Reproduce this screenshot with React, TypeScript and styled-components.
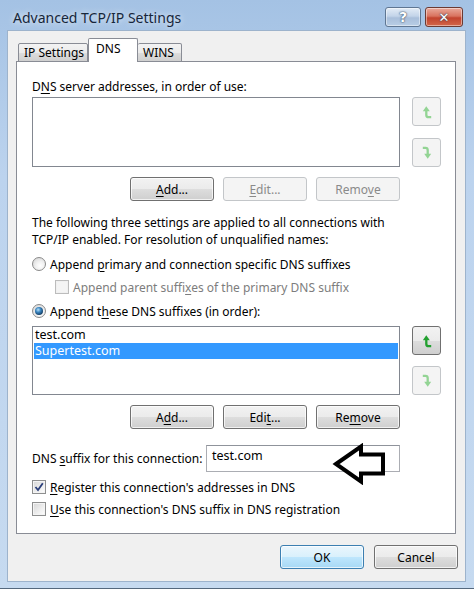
import React from 'react';
import styled, { createGlobalStyle } from 'styled-components';

const GlobalStyle = createGlobalStyle`
  html, body {
    margin: 0;
    padding: 0;
  }
  body {
    font-family: "Noto Sans", "Open Sans", sans-serif;
    font-size: 12px;
    color: #000;
  }
`;

const Window = styled.div`
  width: 474px;
  height: 589px;
  box-sizing: border-box;
  display: flex;
  flex-direction: column;
  background: linear-gradient(180deg, #a4c2e4 0%, #bcd3ee 30%, #c6daf0 100%);
  border-bottom: 1px solid #54687e;
`;

const TitleBar = styled.div`
  height: 32px;
  display: flex;
  align-items: flex-start;
  justify-content: space-between;
  padding: 0 11px 0 13px;
`;

const Title = styled.div`
  margin-top: 8px;
  font-size: 14px;
  color: #16263a;
  text-shadow: 0 0 6px rgba(255, 255, 255, 0.9);
`;

const CaptionGroup = styled.div`
  display: flex;
  gap: 4px;
  margin-top: 7px;
`;

const CaptionButton = styled.div<{ $close?: boolean }>`
  width: ${p => (p.$close ? 38 : 36)}px;
  height: 20px;
  box-sizing: border-box;
  border: 1px solid ${p => (p.$close ? '#6b3a33' : '#5f7692')};
  border-radius: 3px;
  display: flex;
  align-items: center;
  justify-content: center;
  background: ${p =>
    p.$close
      ? 'linear-gradient(180deg, #e9a99b 0%, #d9735f 45%, #c2432e 55%, #d2664a 100%)'
      : 'linear-gradient(180deg, #e3ecf6 0%, #c3d4e9 45%, #a9bfdb 55%, #b8cde5 100%)'};
  box-shadow: inset 0 0 0 1px rgba(255, 255, 255, 0.45);
  color: #fff;
  font-family: "DejaVu Sans", sans-serif;
  font-weight: bold;
  font-size: ${p => (p.$close ? 13 : 14)}px;
  text-shadow: 0 0 2px #33465e, 0 0 1px #33465e;
`;

const Client = styled.div`
  flex: 1;
  margin: 0 9px 7px 8px;
  background: #f0f0f0;
  box-shadow: 0 0 0 1px #9db3cc;
  display: flex;
  flex-direction: column;
  padding: 7px 9px 0 8px;
`;

const TabStrip = styled.div`
  display: flex;
  align-items: flex-end;
  height: 24px;
  padding-left: 2px;
  position: relative;
  z-index: 1;
`;

const Tab = styled.div<{ $active?: boolean; $w: number }>`
  width: ${p => p.$w}px;
  height: ${p => (p.$active ? 24 : 19)}px;
  box-sizing: border-box;
  border: 1px solid #898c95;
  border-bottom: ${p => (p.$active ? 'none' : '1px solid #898c95')};
  border-left: ${p => (p.$active ? '1px solid #898c95' : 'none')};
  &:first-child {
    border-left: 1px solid #898c95;
  }
  border-radius: 2px 2px 0 0;
  background: ${p =>
    p.$active ? '#fff' : 'linear-gradient(180deg, #f3f3f3 0%, #ebebeb 50%, #dddddd 51%, #cfcfcf 100%)'};
  padding: ${p => (p.$active ? '2px 0 0 7px' : '1px 0 0 5px')};
  font-size: 12px;
  line-height: 16px;
`;

const Panel = styled.div`
  height: 473px;
  margin-top: -1px;
  box-sizing: border-box;
  background: #fff;
  border: 1px solid #898c95;
  padding: 0 14px 0 15px;
  display: flex;
  flex-direction: column;
`;

const Label = styled.div<{ $mt: number }>`
  margin-top: ${p => p.$mt}px;
  height: 17px;
  line-height: 17px;
  font-size: 12px;
`;

const ListRow = styled.div<{ $mt: number }>`
  margin-top: ${p => p.$mt}px;
  display: grid;
  grid-template-columns: 368px 29px;
  column-gap: 12px;
`;

const ListBox = styled.div<{ $h: number }>`
  height: ${p => p.$h}px;
  box-sizing: border-box;
  border: 1px solid #828790;
  padding: 0 1px;
  display: flex;
  flex-direction: column;
`;

const ListItem = styled.div<{ $selected?: boolean }>`
  height: 16px;
  line-height: 16px;
  padding-left: 1px;
  font-size: 12.5px;
  background: ${p => (p.$selected ? '#3399ff' : 'transparent')};
  color: ${p => (p.$selected ? '#fff' : '#000')};
`;

const ArrowColumn = styled.div`
  display: flex;
  flex-direction: column;
  justify-content: space-between;
`;

const ArrowButton = styled.div<{ $disabled?: boolean }>`
  width: 29px;
  height: 29px;
  box-sizing: border-box;
  border: 1px solid ${p => (p.$disabled ? '#c3c6c9' : '#707070')};
  border-radius: 3px;
  background: ${p =>
    p.$disabled
      ? '#f4f4f4'
      : 'linear-gradient(180deg, #f2f2f2 0%, #ebebeb 50%, #dddddd 51%, #cfcfcf 100%)'};
  display: flex;
  align-items: center;
  justify-content: center;
`;

const ButtonRow = styled.div<{ $mt: number }>`
  margin-top: ${p => p.$mt}px;
  width: 368px;
  display: flex;
  justify-content: flex-end;
  gap: 9px;
`;

const PushButton = styled.div<{ $disabled?: boolean; $default?: boolean }>`
  width: 84px;
  height: 24px;
  box-sizing: border-box;
  border: 1px solid ${p => (p.$disabled ? '#c3c6c9' : p.$default ? '#3c7fb1' : '#707070')};
  border-radius: 3px;
  display: flex;
  align-items: center;
  justify-content: center;
  font-size: 12px;
  color: ${p => (p.$disabled ? '#8a8a8a' : '#000')};
  background: ${p =>
    p.$disabled
      ? '#f4f4f4'
      : p.$default
      ? 'linear-gradient(180deg, #eaf6fd 0%, #d9f0fc 50%, #bee6fd 51%, #a7d9f5 100%)'
      : 'linear-gradient(180deg, #f2f2f2 0%, #ebebeb 50%, #dddddd 51%, #cfcfcf 100%)'};
  box-shadow: ${p => (p.$disabled ? 'none' : 'inset 0 0 0 1px rgba(255,255,255,0.7)')};
`;

const Paragraph = styled.div<{ $mt: number }>`
  margin-top: ${p => p.$mt}px;
  font-size: 12px;
  line-height: 17px;
`;

const OptionRow = styled.div<{ $mt: number; $indent?: number }>`
  margin-top: ${p => p.$mt}px;
  margin-left: ${p => p.$indent || 0}px;
  height: 18px;
  display: flex;
  align-items: center;
  gap: 4px;
`;

const OptionText = styled.span<{ $disabled?: boolean }>`
  font-size: 12px;
  color: ${p => (p.$disabled ? '#7d7d7d' : '#000')};
`;

const Radio = styled.span<{ $checked?: boolean }>`
  width: 14px;
  height: 14px;
  box-sizing: border-box;
  border-radius: 50%;
  border: 1px solid #8a8a8a;
  background: radial-gradient(circle at 60% 65%, #ffffff 0%, #f1f1f1 40%, #cfcfcf 100%);
  display: flex;
  align-items: center;
  justify-content: center;
  &::after {
    content: '';
    display: ${p => (p.$checked ? 'block' : 'none')};
    width: 8px;
    height: 8px;
    border-radius: 50%;
    background: radial-gradient(circle at 40% 35%, #b7e2fb 0%, #3b86c1 35%, #123c63 75%, #0d2a46 100%);
  }
`;

const CheckBox = styled.span<{ $disabled?: boolean }>`
  width: 14px;
  height: 14px;
  box-sizing: border-box;
  border: 1px solid ${p => (p.$disabled ? '#bcbcbc' : '#8e8f8f')};
  background: ${p =>
    p.$disabled ? '#f4f4f4' : 'linear-gradient(135deg, #d6d6d6 0%, #efefef 60%, #ffffff 100%)'};
  box-shadow: inset 0 0 0 1px ${p => (p.$disabled ? '#f0f0f0' : '#f4f4f4')};
  display: flex;
  align-items: center;
  justify-content: center;
`;

const SuffixRow = styled.div<{ $mt: number }>`
  margin-top: ${p => p.$mt}px;
  width: 368px;
  display: grid;
  grid-template-columns: 1fr 194px;
  align-items: center;
`;

const SuffixInput = styled.div`
  position: relative;
  height: 27px;
  box-sizing: border-box;
  border: 1px solid #abadb3;
  border-top-color: #8f939b;
  padding: 1px 0 0 5px;
  font-size: 12.5px;
  line-height: 18px;
`;

const Annotation = styled.svg`
  position: absolute;
  left: 125px;
  top: -3px;
`;

const Footer = styled.div`
  display: flex;
  justify-content: flex-end;
  gap: 10px;
  padding: 11px 0 12px;
  margin-right: -2px;
`;

const U = styled.span`
  text-decoration: underline;
  text-underline-offset: 2px;
`;

const UpIcon = ({ color }: { color: string }) => (
  <svg width="10" height="14" viewBox="0 0 10 14">
    <path d="M0.8 6.2 L4.3 1.2 L7.8 6.2 Z" fill={color} />
    <path d="M4.3 5 V10 Q4.3 12.2 6.5 12.2 H9.2" stroke={color} strokeWidth="2.3" fill="none" />
  </svg>
);

const DownIcon = ({ color }: { color: string }) => (
  <svg width="10" height="14" viewBox="0 0 10 14">
    <path d="M0.8 1.8 H3.5 Q5.7 1.8 5.7 4 V9" stroke={color} strokeWidth="2.3" fill="none" />
    <path d="M2.2 7.8 L5.7 12.8 L9.2 7.8 Z" fill={color} />
  </svg>
);

const CheckMark = () => (
  <svg width="10" height="10" viewBox="0 0 10 10">
    <path d="M1.5 5 L4 8 L8.8 1.2" stroke="#2b3f7a" strokeWidth="1.8" fill="none" />
  </svg>
);

const GREEN = '#23a030';
const GREEN_OFF = '#93d494';

export default function App() {
  return (
    <>
      <GlobalStyle />
      <Window>
        <TitleBar>
          <Title>Advanced TCP/IP Settings</Title>
          <CaptionGroup>
            <CaptionButton>?</CaptionButton>
            <CaptionButton $close>✕</CaptionButton>
          </CaptionGroup>
        </TitleBar>
        <Client>
          <TabStrip>
            <Tab $w={70}>IP Settings</Tab>
            <Tab $w={50} $active>DNS</Tab>
            <Tab $w={44}>WINS</Tab>
          </TabStrip>
          <Panel>
            <Label $mt={16}>
              D<U>N</U>S server addresses, in order of use:
            </Label>
            <ListRow $mt={2}>
              <ListBox $h={70} />
              <ArrowColumn>
                <ArrowButton $disabled>
                  <UpIcon color={GREEN_OFF} />
                </ArrowButton>
                <ArrowButton $disabled>
                  <DownIcon color={GREEN_OFF} />
                </ArrowButton>
              </ArrowColumn>
            </ListRow>
            <ButtonRow $mt={10}>
              <PushButton>
                <span>
                  <U>A</U>dd...
                </span>
              </PushButton>
              <PushButton $disabled>
                <span>
                  <U>E</U>dit...
                </span>
              </PushButton>
              <PushButton $disabled>
                <span>
                  Remo<U>v</U>e
                </span>
              </PushButton>
            </ButtonRow>
            <Paragraph $mt={13}>
              The following three settings are applied to all connections with
              <br />
              TCP/IP enabled. For resolution of unqualified names:
            </Paragraph>
            <OptionRow $mt={7}>
              <Radio />
              <OptionText>
                Append <U>p</U>rimary and connection specific DNS suffixes
              </OptionText>
            </OptionRow>
            <OptionRow $mt={5} $indent={23}>
              <CheckBox $disabled />
              <OptionText $disabled>
                Append parent suffi<U>x</U>es of the primary DNS suffix
              </OptionText>
            </OptionRow>
            <OptionRow $mt={6}>
              <Radio $checked />
              <OptionText>
                Append t<U>h</U>ese DNS suffixes (in order):
              </OptionText>
            </OptionRow>
            <ListRow $mt={6}>
              <ListBox $h={69}>
                <ListItem>test.com</ListItem>
                <ListItem $selected>Supertest.com</ListItem>
              </ListBox>
              <ArrowColumn>
                <ArrowButton>
                  <UpIcon color={GREEN} />
                </ArrowButton>
                <ArrowButton $disabled>
                  <DownIcon color={GREEN_OFF} />
                </ArrowButton>
              </ArrowColumn>
            </ListRow>
            <ButtonRow $mt={10}>
              <PushButton>
                <span>
                  A<U>d</U>d...
                </span>
              </PushButton>
              <PushButton>
                <span>
                  Edi<U>t</U>...
                </span>
              </PushButton>
              <PushButton>
                <span>
                  Re<U>m</U>ove
                </span>
              </PushButton>
            </ButtonRow>
            <SuffixRow $mt={16}>
              <OptionText>
                DNS <U>s</U>uffix for this connection:
              </OptionText>
              <SuffixInput>
                test.com
                <Annotation width="56" height="42" viewBox="0 0 56 42">
                  <path
                    d="M4 21 L29 3.5 L29 11.5 L51 11.5 L51 30.5 L29 30.5 L29 38.5 Z"
                    fill="#fff"
                    stroke="#000"
                    strokeWidth="4"
                    strokeLinejoin="miter"
                  />
                </Annotation>
              </SuffixInput>
            </SuffixRow>
            <OptionRow $mt={6}>
              <CheckBox>
                <CheckMark />
              </CheckBox>
              <OptionText>
                <U>R</U>egister this connection's addresses in DNS
              </OptionText>
            </OptionRow>
            <OptionRow $mt={4}>
              <CheckBox />
              <OptionText>
                <U>U</U>se this connection's DNS suffix in DNS registration
              </OptionText>
            </OptionRow>
          </Panel>
          <Footer>
            <PushButton $default>OK</PushButton>
            <PushButton>Cancel</PushButton>
          </Footer>
        </Client>
      </Window>
    </>
  );
}
